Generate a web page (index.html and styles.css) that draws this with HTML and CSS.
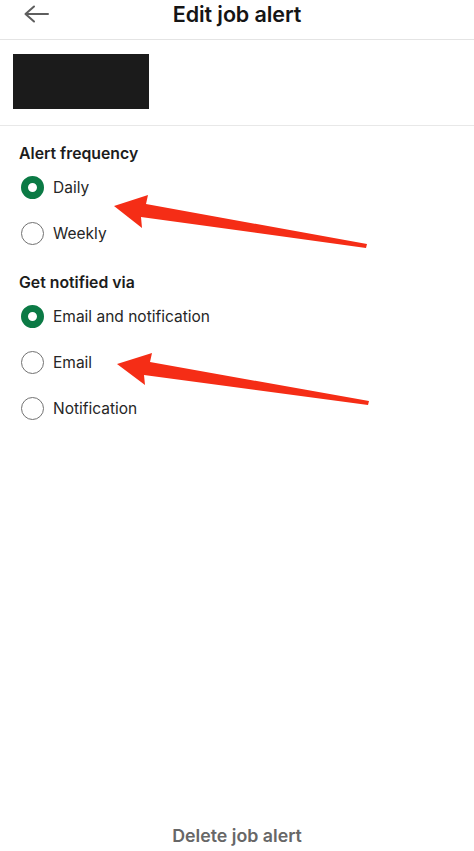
FILE: index.html
```html
<!DOCTYPE html>
<html lang="en">
<head>
<meta charset="utf-8">
<title>Edit job alert</title>
<link rel="stylesheet" href="styles.css">
</head>
<body>
<div class="page">
  <header class="topbar">
    <button class="back" aria-label="Back">
      <svg width="26" height="18" viewBox="0 0 26 18"><path d="M11 1.5 L2.5 9 L11 16.5 M2.5 9 H25" fill="none" stroke="#5e5e5e" stroke-width="2" stroke-linecap="round" stroke-linejoin="round"/></svg>
    </button>
    <h1 class="title">Edit job alert</h1>
  </header>

  <section class="job">
    <div class="redacted"></div>
  </section>

  <main class="settings">
    <div class="group">
      <div class="group-label">Alert frequency</div>
      <label class="option"><span class="radio checked"></span><span class="opt-text">Daily</span></label>
      <label class="option"><span class="radio"></span><span class="opt-text">Weekly</span></label>
    </div>
    <div class="group second">
      <div class="group-label">Get notified via</div>
      <label class="option"><span class="radio checked"></span><span class="opt-text">Email and notification</span></label>
      <label class="option"><span class="radio"></span><span class="opt-text">Email</span></label>
      <label class="option"><span class="radio"></span><span class="opt-text">Notification</span></label>
    </div>
  </main>

  <footer class="footer">
    <button class="delete">Delete job alert</button>
  </footer>

  <svg class="annotations" width="474" height="851" viewBox="0 0 474 851">
    <polygon fill="#f52d16" points="114,206 148,195 146,204 367,244 366,248 141,217 142,228"/>
    <polygon fill="#f52d16" points="117,364 152,353 150,362 369,401 368,405 144,375 145,385"/>
  </svg>
</div>
</body>
</html>
```

FILE: styles.css
```css
* { box-sizing: border-box; }
html, body { margin: 0; padding: 0; background: #fff; }
body {
  font-family: Inter, "Open Sans", "Liberation Sans", sans-serif;
  color: #1e1e1e;
}
.page {
  position: relative;
  width: 474px;
  min-height: 851px;
  display: flex;
  flex-direction: column;
}
.topbar {
  position: relative;
  height: 40px;
  border-bottom: 1px solid #e4e4e4;
  display: flex;
  align-items: center;
  justify-content: center;
}
.back {
  position: absolute;
  left: 23px;
  top: 5px;
  border: 0;
  background: none;
  padding: 0;
  width: 26px;
  height: 18px;
  display: flex;
}
.title {
  margin: 0 0 12px;
  font-size: 21.5px;
  font-weight: 600;
  color: #151515;
  letter-spacing: -0.1px;
}
.job {
  padding: 14px 13px 16px;
  border-bottom: 1px solid #e8e8e8;
}
.redacted {
  width: 136px;
  height: 55px;
  background: #1b1b1b;
}
.settings {
  flex: 1;
  padding: 18px 0 0 19px;
}
.group-label {
  font-size: 15.8px;
  line-height: 20px;
  font-weight: 600;
  color: #1c1c1c;
}
.group.second { margin-top: 17px; }
.option {
  height: 46px;
  display: flex;
  align-items: center;
  gap: 9px;
  margin-left: 2px;
}
.radio {
  width: 23px;
  height: 23px;
  border-radius: 50%;
  border: 1.3px solid #727272;
  flex: none;
}
.radio.checked {
  border: 7px solid #0b7a45;
  background: #fff;
}
.opt-text {
  font-size: 15.5px;
  color: #262626;
}
.footer {
  display: flex;
  justify-content: center;
  padding-bottom: 5px;
}
.delete {
  border: 0;
  background: none;
  padding: 0;
  font-family: inherit;
  font-size: 17.8px;
  line-height: 20px;
  font-weight: 600;
  color: #676767;
}
.annotations {
  position: absolute;
  left: 0;
  top: 0;
  pointer-events: none;
}
```
